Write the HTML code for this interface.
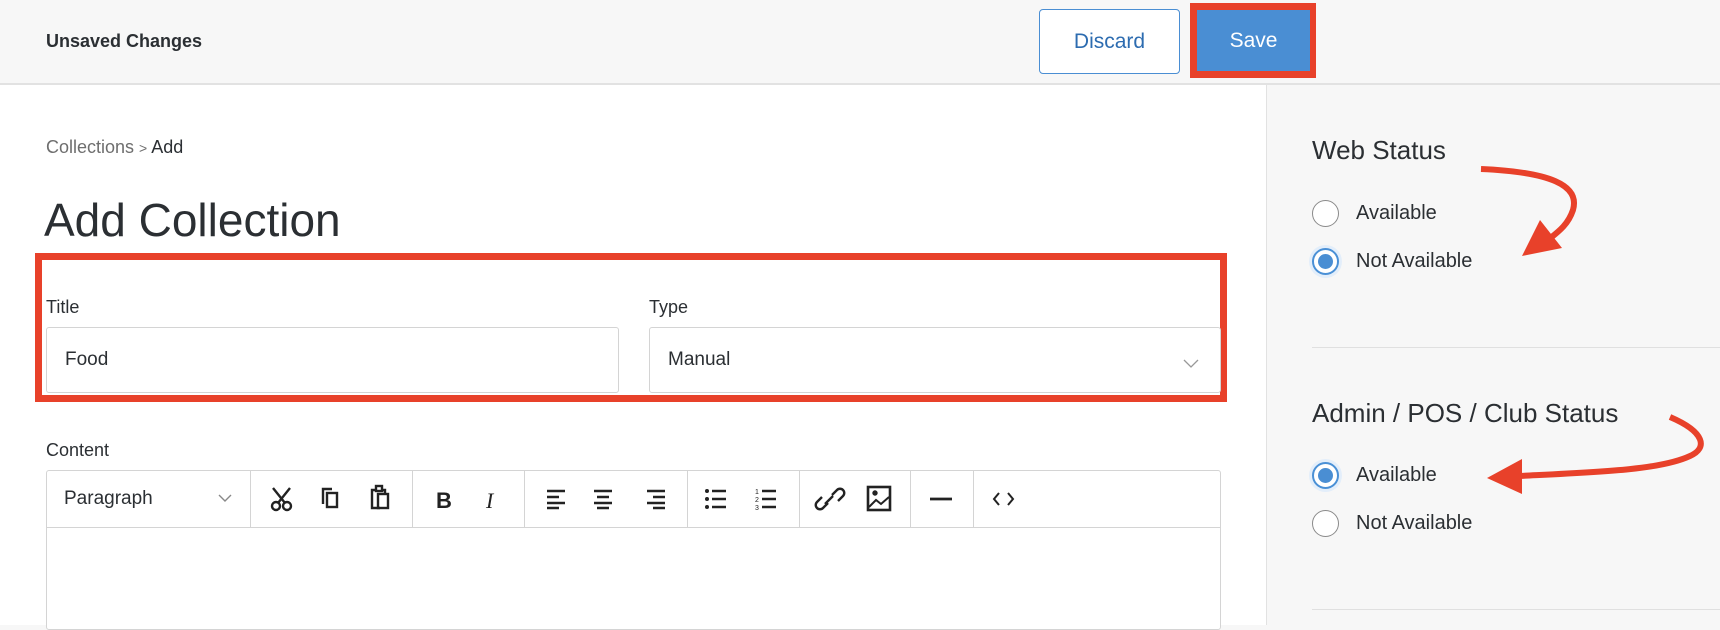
<!DOCTYPE html>
<html><head><meta charset="utf-8"><style>
*{box-sizing:border-box;margin:0;padding:0}
body{width:1720px;height:617px;overflow:hidden;background:#f7f7f7;font-family:"Liberation Sans",sans-serif;color:#2b2f33;position:relative}
.a{position:absolute}
.hdr{left:0;top:0;width:1720px;height:85px;background:#f7f7f7;border-bottom:2px solid #e2e2e2}
.main{left:0;top:85px;width:1267px;height:540px;background:#fff;border-right:1px solid #e2e2e2}
.lbl{font-size:18px;color:#2b2f33}
.inp{border:1px solid #d4d4d4;border-radius:3px;background:#fff;font-size:19px;padding-left:18px;line-height:64px}
.radio{width:27px;height:27px;border-radius:50%;border:1.5px solid #8a8a8a;background:#fff}
.radio.on{border:2px solid #4a90d6;box-shadow:0 0 0 3px #e3eefa}
.radio.on::after{content:"";position:absolute;left:4px;top:4px;width:15px;height:15px;border-radius:50%;background:#4a8ed3}
.rl{font-size:20px;color:#2b2f33}
.sep{top:0;width:1px;height:57px;background:#d4d4d4}
</style></head><body>
<div class="a hdr"></div>
<div class="a" style="left:46px;top:31px;font-size:18px;font-weight:bold;color:#2b2f33">Unsaved Changes</div>
<div class="a" style="left:1039px;top:9px;width:141px;height:65px;border:1px solid #4a8ed3;border-radius:4px;background:#fff;color:#2d6cb0;font-size:21px;text-align:center;line-height:63px">Discard</div>
<div class="a" style="left:1190px;top:3px;width:126px;height:75px;background:#e8412a"></div>
<div class="a" style="left:1197px;top:10px;width:113px;height:61px;background:#4a8ed3;color:#fff;font-size:21px;text-align:center;line-height:61px">Save</div>

<div class="a main"></div>
<div class="a" style="left:46px;top:137px;font-size:18px;color:#6e6e6e">Collections <span style="font-size:14px">&gt;</span> <span style="color:#2b2f33">Add</span></div>
<div class="a" style="left:44px;top:193px;font-size:46px;color:#2b2f33">Add Collection</div>

<div class="a" style="left:35px;top:253px;width:1192px;height:149px;border:7px solid #e8412a"></div>
<div class="a lbl" style="left:46px;top:297px">Title</div>
<div class="a lbl" style="left:649px;top:297px">Type</div>
<div class="a inp" style="left:46px;top:327px;width:573px;height:66px">Food</div>
<div class="a inp" style="left:649px;top:327px;width:572px;height:66px">Manual</div>
<svg class="a" style="left:1182px;top:357px" width="18" height="12"><path d="M2 3l7 7 7-7" fill="none" stroke="#999" stroke-width="1.3"/></svg>

<div class="a lbl" style="left:46px;top:440px">Content</div>
<div class="a" style="left:46px;top:470px;width:1175px;height:160px;border:1px solid #d4d4d4;border-radius:3px;background:#fff">
 <div class="a" style="left:0;top:56px;width:100%;height:1px;background:#d4d4d4"></div>
 <div class="a" style="left:17px;top:17px;font-size:19px">Paragraph</div>
 <svg class="a" style="left:170px;top:21px" width="16" height="12"><path d="M2 3l6 6 6-6" fill="none" stroke="#888" stroke-width="1.4"/></svg>
 <div class="a sep" style="left:203px"></div><div class="a sep" style="left:365px"></div><div class="a sep" style="left:477px"></div><div class="a sep" style="left:640px"></div><div class="a sep" style="left:752px"></div><div class="a sep" style="left:863px"></div><div class="a sep" style="left:926px"></div>
 <svg class="a" style="left:0;top:0" width="1000" height="56" fill="none" stroke="#222" stroke-width="2.4">
  <circle cx="229" cy="35" r="4"/><circle cx="240" cy="35" r="4"/><path d="M226 17l12 15M243 17l-12 15"/>
  <path d="M276 33V18h9"/><rect x="280" y="22" width="10" height="14"/>
  <path d="M328 19h-3v18h8M335 19h3v5"/><rect x="331" y="23" width="10" height="14"/><rect x="329" y="15" width="6" height="5"/>
  <path d="M500 20h18M500 26h12M500 32h18M500 37h12"/>
  <path d="M547 20h18M550 26h12M547 32h18M550 37h12"/>
  <path d="M600 20h18M606 26h12M600 32h18M606 37h12"/>
  <path d="M665 20h14M665 28h14M665 36h14"/>
  <path d="M715 20h14M715 28h14M715 36h14"/>
  <path d="M785 24l5-5a4 4 0 016 6l-5 5M781 32l-5 5a4 4 0 01-6-6l5-5M778 33l8-8"/>
  <rect x="821" y="16" width="22" height="23" stroke-width="2.6"/><path d="M822 36l7-7 5 4 8-7" stroke-width="2"/><circle cx="828" cy="22" r="1.5" fill="#222"/>
  <path d="M883 28h22" stroke-width="2.8"/>
  <path d="M952 22l-5 6 5 6M961 22l5 6-5 6" stroke-width="2"/>
 </svg>
 <svg class="a" style="left:0;top:0" width="1000" height="56" fill="#222">
  <circle cx="660" cy="20" r="2"/><circle cx="660" cy="28" r="2"/><circle cx="660" cy="36" r="2"/>
  <text x="708" y="23" font-size="7" font-family="Liberation Sans">1</text><text x="708" y="31" font-size="7" font-family="Liberation Sans">2</text><text x="708" y="39" font-size="7" font-family="Liberation Sans">3</text>
  <text x="389" y="37" font-size="22" font-weight="bold" font-family="Liberation Sans">B</text>
  <text x="439" y="37" font-size="22" font-style="italic" font-family="Liberation Serif">I</text>
 </svg>
</div>

<div class="a" style="left:1312px;top:135px;font-size:26px;color:#2b2f33">Web Status</div>
<div class="a radio" style="left:1312px;top:200px"></div>
<div class="a rl" style="left:1356px;top:202px">Available</div>
<div class="a radio on" style="left:1312px;top:248px"></div>
<div class="a rl" style="left:1356px;top:250px">Not Available</div>
<div class="a" style="left:1312px;top:347px;width:408px;height:1px;background:#e0e0e0"></div>
<div class="a" style="left:1312px;top:398px;font-size:26px;color:#2b2f33">Admin / POS / Club Status</div>
<div class="a radio on" style="left:1312px;top:462px"></div>
<div class="a rl" style="left:1356px;top:464px">Available</div>
<div class="a radio" style="left:1312px;top:510px"></div>
<div class="a rl" style="left:1356px;top:512px">Not Available</div>
<div class="a" style="left:1312px;top:609px;width:408px;height:1px;background:#e0e0e0"></div>

<svg class="a" style="left:0;top:0" width="1720" height="617">
 <path d="M1481 169C1550 172 1580 185 1573 210C1568 225 1558 232 1548 240" fill="none" stroke="#e8412a" stroke-width="6"/>
 <path d="M1522 256L1540 220L1562 248Z" fill="#e8412a"/>
 <path d="M1670 417C1705 432 1708 448 1690 456C1660 470 1600 472 1520 476" fill="none" stroke="#e8412a" stroke-width="6"/>
 <path d="M1487 478L1522 459L1522 494Z" fill="#e8412a"/>
</svg>
</body></html>
